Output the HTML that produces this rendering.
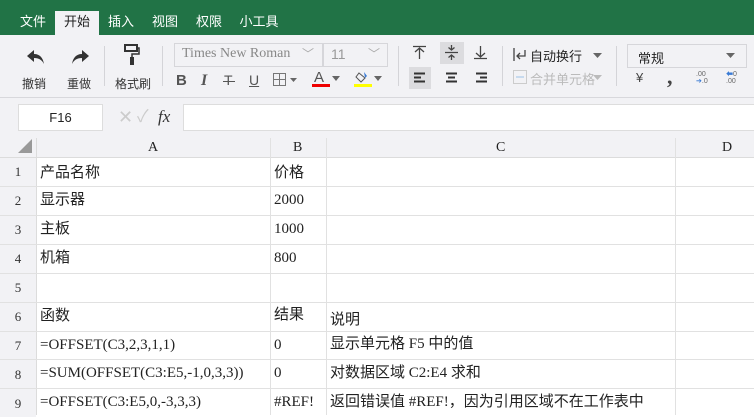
<!DOCTYPE html>
<html><head><meta charset="utf-8"><style>
*{margin:0;padding:0;box-sizing:border-box}
body{width:754px;height:415px;overflow:hidden;background:#f2f2f5;font-family:"Liberation Sans","Noto Sans CJK SC",sans-serif;position:relative}
.a{position:absolute}
.tabs{left:0;top:0;width:754px;height:35px;background:#217346}
.tab{position:absolute;top:11px;height:24px;color:#fff;font-size:13px;line-height:22px;text-align:center}
.lbl{font-size:12px;color:#333;position:absolute}
.sep{position:absolute;width:1px;background:#d4d4d8}
.box{position:absolute;background:#f2f2f5;border:1px solid #d6d6da}
.ic{position:absolute;color:#555;font-size:14px;text-align:center}
.cell{position:absolute;font-family:"Liberation Serif","Noto Sans CJK SC",serif;font-size:15px;color:#222;white-space:nowrap;line-height:20px}
.rn{position:absolute;left:0;width:36px;text-align:center;font-family:"Liberation Serif",serif;font-size:13px;color:#333}
.hl{position:absolute;height:1px;background:#e1e1e1;left:0;width:754px}
.vl{position:absolute;width:1px;background:#e1e1e1;top:138px;height:277px}
</style></head><body>
<div class="a tabs"></div>
<div class="tab" style="left:13px;width:40px">文件</div>
<div class="tab" style="left:55px;width:44px;background:#f2f2f5;color:#222">开始</div>
<div class="tab" style="left:99px;width:44px">插入</div>
<div class="tab" style="left:143px;width:44px">视图</div>
<div class="tab" style="left:187px;width:44px">权限</div>
<div class="tab" style="left:231px;width:56px">小工具</div>

<svg class="a" style="left:25px;top:48px" width="22" height="18" viewBox="0 0 22 18"><path d="M9 2 L2 8 L9 14 V10 C14 10 17 12 19 16 C18 10 15 6 9 6 Z" fill="#333"/></svg>
<svg class="a" style="left:69px;top:48px" width="22" height="18" viewBox="0 0 22 18"><path d="M13 2 L20 8 L13 14 V10 C8 10 5 12 3 16 C4 10 7 6 13 6 Z" fill="#333"/></svg>
<div class="lbl" style="left:22px;top:75px">撤销</div>
<div class="lbl" style="left:67px;top:75px">重做</div>
<div class="sep" style="left:104px;top:46px;height:40px"></div>
<svg class="a" style="left:123px;top:44px" width="18" height="22" viewBox="0 0 18 22"><rect x="2" y="1" width="12" height="6" fill="none" stroke="#333" stroke-width="2"/><path d="M14 4 H16 V10 H9 V13" fill="none" stroke="#333" stroke-width="1.5"/><rect x="7" y="13" width="4" height="8" fill="#333"/></svg>
<div class="lbl" style="left:115px;top:75px">格式刷</div>
<div class="sep" style="left:162px;top:46px;height:40px"></div>

<div class="box" style="left:174px;top:43px;width:149px;height:24px"></div>
<div class="a" style="left:182px;top:46px;font-family:'Liberation Serif',serif;font-size:14px;color:#888">Times New Roman</div>
<div class="a" style="left:302px;top:45px;color:#aaa;font-size:12px">﹀</div>
<div class="box" style="left:323px;top:43px;width:65px;height:24px"></div>
<div class="a" style="left:331px;top:46px;font-size:14px;color:#999">11</div>
<div class="a" style="left:368px;top:45px;color:#aaa;font-size:12px">﹀</div>

<div class="ic" style="left:176px;top:72px;font-weight:bold;font-size:15px">B</div>
<div class="ic" style="left:201px;top:72px;font-style:italic;font-family:'Liberation Serif',serif;font-size:16px;font-weight:bold">I</div>
<div class="ic" style="left:224px;top:72px;font-size:14px">T</div>
<div class="a" style="left:223px;top:81px;width:12px;height:1px;background:#555"></div>
<div class="ic" style="left:249px;top:72px;font-size:14px;text-decoration:underline">U</div>
<svg class="a" style="left:273px;top:73px" width="30" height="14"><rect x="0.5" y="0.5" width="12" height="12" fill="none" stroke="#777"/><path d="M6.5 0 V13 M0 6.5 H13" stroke="#777"/><path d="M17 5 H24 L20.5 9 Z" fill="#666"/></svg>
<div class="ic" style="left:314px;top:69px;font-size:15px">A</div>
<div class="a" style="left:312px;top:84px;width:18px;height:3px;background:#e00"></div>
<svg class="a" style="left:332px;top:76px" width="10" height="6"><path d="M0 0 H8 L4 5 Z" fill="#666"/></svg>
<svg class="a" style="left:355px;top:70px" width="14" height="13"><path d="M4 3 L10 8 L6 12 L1 7 Z" fill="none" stroke="#555"/><path d="M9 2 L12 6 L10 8" fill="#3a7bd5"/></svg>
<div class="a" style="left:354px;top:84px;width:18px;height:3px;background:#ff0"></div>
<svg class="a" style="left:374px;top:76px" width="10" height="6"><path d="M0 0 H8 L4 5 Z" fill="#666"/></svg>
<div class="sep" style="left:398px;top:46px;height:40px"></div>

<div class="a" style="left:440px;top:42px;width:24px;height:22px;background:#dcdcdf"></div>
<div class="a" style="left:409px;top:67px;width:22px;height:22px;background:#dcdcdf"></div>
<svg class="a" style="left:412px;top:45px" width="16" height="16"><path d="M1 1.5 H14 M7.5 3 V14 M3 7 L7.5 3 L12 7" fill="none" stroke="#444" stroke-width="1.3"/></svg>
<svg class="a" style="left:444px;top:45px" width="16" height="16"><path d="M1 7.5 H14 M7.5 0 V5 M7.5 10 V15 M4.5 2.5 L7.5 5 L10.5 2.5 M4.5 12.5 L7.5 10 L10.5 12.5" fill="none" stroke="#444" stroke-width="1.3"/></svg>
<svg class="a" style="left:473px;top:45px" width="16" height="16"><path d="M1 13.5 H14 M7.5 1 V12 M3 8 L7.5 12 L12 8" fill="none" stroke="#444" stroke-width="1.3"/></svg>
<svg class="a" style="left:413px;top:72px" width="14" height="12"><path d="M1 1.5 H12 M1 5.5 H8 M1 9.5 H12" stroke="#333" stroke-width="2"/></svg>
<svg class="a" style="left:445px;top:72px" width="14" height="12"><path d="M1 1.5 H12 M3 5.5 H10 M1 9.5 H12" stroke="#333" stroke-width="2"/></svg>
<svg class="a" style="left:475px;top:72px" width="14" height="12"><path d="M1 1.5 H12 M5 5.5 H12 M1 9.5 H12" stroke="#333" stroke-width="2"/></svg>
<div class="sep" style="left:502px;top:46px;height:40px"></div>

<svg class="a" style="left:513px;top:48px" width="14" height="14"><path d="M1 0 V13 M12 2 V8 H5 M7 5 L4 8 L7 11" fill="none" stroke="#444" stroke-width="1.3"/></svg>
<div class="a" style="left:530px;top:46px;font-size:13px;color:#222">自动换行</div>
<svg class="a" style="left:593px;top:53px" width="10" height="6"><path d="M0 0 H9 L4.5 5 Z" fill="#666"/></svg>
<svg class="a" style="left:513px;top:70px" width="14" height="14"><rect x="0.5" y="0.5" width="13" height="13" fill="none" stroke="#ccc"/><path d="M3 7 H11" stroke="#9cc3e8"/></svg>
<div class="a" style="left:530px;top:69px;font-size:13px;color:#bbb">合并单元格</div>
<svg class="a" style="left:593px;top:75px" width="10" height="6"><path d="M0 0 H9 L4.5 5 Z" fill="#bbb"/></svg>
<div class="sep" style="left:616px;top:46px;height:40px"></div>

<div class="box" style="left:627px;top:44px;width:120px;height:24px"></div>
<div class="a" style="left:638px;top:48px;font-size:13px;color:#222">常规</div>
<svg class="a" style="left:726px;top:53px" width="10" height="6"><path d="M0 0 H9 L4.5 5 Z" fill="#666"/></svg>
<div class="a" style="left:636px;top:70px;font-size:13px;color:#444">¥</div>
<div class="a" style="left:667px;top:64px;font-size:22px;color:#444;font-weight:bold;font-family:'Liberation Serif',serif">,</div>
<div class="a" style="left:696px;top:71px;font-size:7px;color:#666;line-height:7px">.00<br><span style="color:#3a7bd5">➔</span>.0</div>
<div class="a" style="left:726px;top:71px;font-size:7px;color:#666;line-height:7px"><span style="color:#3a7bd5">⬅</span>0<br>.00</div>

<div class="a" style="left:0;top:97px;width:754px;height:1px;background:#d8d8dc"></div>
<div class="a" style="left:18px;top:104px;width:85px;height:27px;background:#fff;border:1px solid #ddd;text-align:center;font-size:13px;line-height:25px;color:#222">F16</div>
<div class="a" style="left:118px;top:106px;font-size:18px;line-height:22px;color:#ccc">✕</div>
<div class="a" style="left:137px;top:106px;font-size:17px;line-height:22px;color:#ccc">✓</div>
<div class="a" style="left:158px;top:107px;font-size:17px;line-height:20px;color:#333;font-style:italic;font-family:'Liberation Serif',serif">fx</div>
<div class="a" style="left:183px;top:104px;width:575px;height:27px;background:#fff;border:1px solid #ddd"></div>

<div class="a" style="left:36px;top:157px;width:718px;height:260px;background:#fff"></div>
<svg class="a" style="left:18px;top:139px" width="14" height="14"><path d="M14 0 V14 H0 Z" fill="#999"/></svg>
<div class="a" style="left:36px;top:138px;width:1px;height:277px;background:#dcdcdc"></div>
<div class="hl" style="top:157px;background:#dcdcdc"></div>
<div class="vl" style="left:270px"></div>
<div class="vl" style="left:326px"></div>
<div class="vl" style="left:675px"></div>
<div class="hl" style="top:186px"></div>
<div class="hl" style="top:215px"></div>
<div class="hl" style="top:244px"></div>
<div class="hl" style="top:273px"></div>
<div class="hl" style="top:302px"></div>
<div class="hl" style="top:331px"></div>
<div class="hl" style="top:359px"></div>
<div class="hl" style="top:388px"></div>
<div class="cell" style="left:148px;top:138px;font-size:14px">A</div>
<div class="cell" style="left:293px;top:138px;font-size:14px">B</div>
<div class="cell" style="left:496px;top:138px;font-size:14px">C</div>
<div class="cell" style="left:722px;top:138px;font-size:14px">D</div>

<div class="rn" style="top:164px">1</div>
<div class="rn" style="top:193px">2</div>
<div class="rn" style="top:222px">3</div>
<div class="rn" style="top:251px">4</div>
<div class="rn" style="top:280px">5</div>
<div class="rn" style="top:309px">6</div>
<div class="rn" style="top:338px">7</div>
<div class="rn" style="top:367px">8</div>
<div class="rn" style="top:396px">9</div>

<div class="cell" style="left:40px;top:163px">产品名称</div><div class="cell" style="left:274px;top:163px">价格</div>
<div class="cell" style="left:40px;top:190px">显示器</div><div class="cell" style="left:274px;top:190px">2000</div>
<div class="cell" style="left:40px;top:219px">主板</div><div class="cell" style="left:274px;top:219px">1000</div>
<div class="cell" style="left:40px;top:248px">机箱</div><div class="cell" style="left:274px;top:248px">800</div>
<div class="cell" style="left:40px;top:306px">函数</div><div class="cell" style="left:274px;top:305px">结果</div><div class="cell" style="left:330px;top:310px">说明</div>
<div class="cell" style="left:40px;top:335px">=OFFSET(C3,2,3,1,1)</div><div class="cell" style="left:274px;top:335px">0</div><div class="cell" style="left:330px;top:334px">显示单元格 F5 中的值</div>
<div class="cell" style="left:40px;top:363px">=SUM(OFFSET(C3:E5,-1,0,3,3))</div><div class="cell" style="left:274px;top:363px">0</div><div class="cell" style="left:330px;top:363px">对数据区域 C2:E4 求和</div>
<div class="cell" style="left:40px;top:392px">=OFFSET(C3:E5,0,-3,3,3)</div><div class="cell" style="left:274px;top:392px">#REF!</div><div class="cell" style="left:330px;top:392px">返回错误值 #REF!，因为引用区域不在工作表中</div>
</body></html>
